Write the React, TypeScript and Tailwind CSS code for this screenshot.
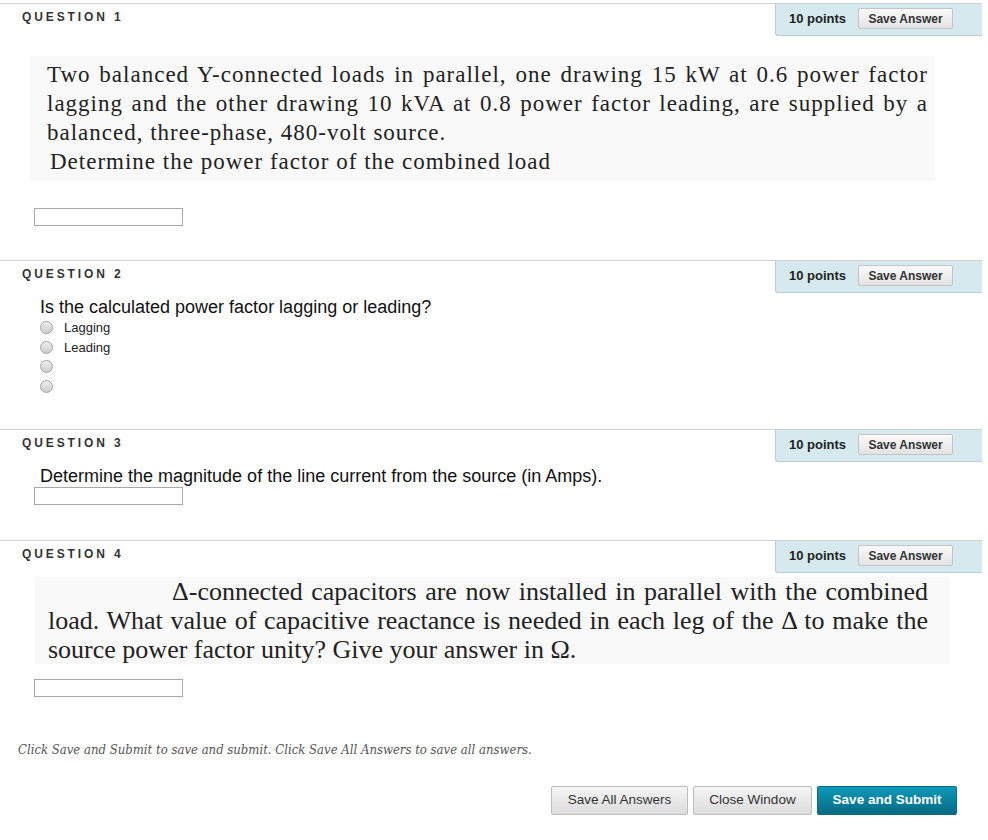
import React from 'react'

const sans = { fontFamily: '"Liberation Sans", Arial, sans-serif' }

function PointsBox() {
  return (
    <div className="flex h-[32px] w-[207px] items-center gap-[12px] rounded-bl-[3px] border-b border-l border-[#b9ced5] bg-[#d5e9ef] pb-[2px] pl-[13px]">
      <span className="text-[13px] font-bold text-[#222]">10 points</span>
      <button className="h-[21px] w-[95px] rounded-[2px] border border-[#c4c4c4] bg-gradient-to-b from-[#fafafa] to-[#e3e3e3] text-[12px] font-bold text-[#333]">
        Save Answer
      </button>
    </div>
  )
}

function QuestionHeader({ n }: { n: number }) {
  return (
    <div className="flex items-start justify-between">
      <div className="pl-[22px] pt-[6px] text-[12px] font-bold leading-[14px] tracking-[2.9px] text-[#333]">
        QUESTION {n}
      </div>
      <PointsBox />
    </div>
  )
}

function AnswerInput({ className = '' }: { className?: string }) {
  return <input type="text" className={`ml-[34px] block h-[18px] w-[149px] border border-[#a9a9a9] bg-white ${className}`} />
}

function Radio({ label }: { label?: string }) {
  return (
    <div className="flex h-[19.5px] items-center pl-[40px]">
      <span className="h-[13px] w-[13px] rounded-full border border-[#a3a3a3] bg-gradient-to-b from-[#eeeeee] to-[#cdcdcd]" />
      <span className="pl-[11px] text-[13px] text-[#222]">{label}</span>
    </div>
  )
}

export default function App() {
  const serif = { fontFamily: '"Liberation Serif", "Times New Roman", serif' }
  const justifyLine = 'text-justify [text-align-last:justify]'

  return (
    <div className="h-[840px] w-[988px] overflow-hidden bg-white pt-[3px]" style={sans}>
      <div className="w-[982px]">
        {/* Question 1 */}
        <section className="h-[257px] border-t border-[#d0d0d0]">
          <QuestionHeader n={1} />
          <div className="ml-[30px] mt-[20px] w-[905px] bg-[#f9f9f9] pb-[5px] pl-[17px] pr-[7px] pt-[4px] text-[23px] leading-[29px] tracking-[1px] text-[#222]" style={serif}>
            <div className={justifyLine}>Two balanced Y-connected loads in parallel, one drawing 15 kW at 0.6 power factor</div>
            <div className={justifyLine}>lagging and the other drawing 10 kVA at 0.8 power factor leading, are supplied by a</div>
            <div>balanced, three-phase, 480-volt source.</div>
            <div className="pl-[3px]">Determine the power factor of the combined load</div>
          </div>
          <AnswerInput className="mt-[27px]" />
        </section>

        {/* Question 2 */}
        <section className="h-[169px] border-t border-[#d0d0d0]">
          <QuestionHeader n={2} />
          <div className="mt-[4px] pl-[40px] text-[18px] leading-[20px] text-[#111]">
            Is the calculated power factor lagging or leading?
          </div>
          <div className="mt-[1px]">
            <Radio label="Lagging" />
            <Radio label="Leading" />
            <Radio />
            <Radio />
          </div>
        </section>

        {/* Question 3 */}
        <section className="h-[111px] border-t border-[#d0d0d0]">
          <QuestionHeader n={3} />
          <div className="mt-[4px] pl-[40px] text-[18px] leading-[20px] text-[#111]">
            Determine the magnitude of the line current from the source (in Amps).
          </div>
          <AnswerInput className="mt-[1px]" />
        </section>

        {/* Question 4 */}
        <section className="h-[180px] border-t border-[#d0d0d0]">
          <QuestionHeader n={4} />
          <div className="ml-[35px] mt-[4px] w-[915px] bg-[#f9f9f9] pl-[13px] pr-[22px] text-[26px] leading-[29px] text-[#222]" style={serif}>
            <div className={`${justifyLine} pl-[124px]`}>Δ-connected capacitors are now installed in parallel with the combined</div>
            <div className={justifyLine}>load. What value of capacitive reactance is needed in each leg of the Δ to make the</div>
            <div>source power factor unity? Give your answer in Ω.</div>
          </div>
          <AnswerInput className="mt-[15px]" />
        </section>

        <p
          className="mt-[22px] pl-[18px] text-[13px] italic leading-[16px] text-[#555] [font-stretch:condensed]"
          style={{ fontFamily: '"DejaVu Serif Condensed", "DejaVu Serif", Georgia, serif' }}
        >
          Click Save and Submit to save and submit. Click Save All Answers to save all answers.
        </p>

        <div className="mt-[28px] flex justify-end gap-[5px] pr-[25px]">
          <button className="h-[29px] w-[137px] rounded-[2px] border border-[#bdbdbd] bg-gradient-to-b from-[#f5f5f5] to-[#dcdcdc] text-[13.5px] text-[#333]">
            Save All Answers
          </button>
          <button className="h-[29px] w-[119px] rounded-[2px] border border-[#bdbdbd] bg-gradient-to-b from-[#f5f5f5] to-[#dcdcdc] text-[13.5px] text-[#333]">
            Close Window
          </button>
          <button className="h-[29px] w-[140px] rounded-[2px] border border-[#0a6c85] bg-gradient-to-b from-[#0d9abb] to-[#066b84] text-[13.5px] font-bold text-white">
            Save and Submit
          </button>
        </div>
      </div>
    </div>
  )
}
